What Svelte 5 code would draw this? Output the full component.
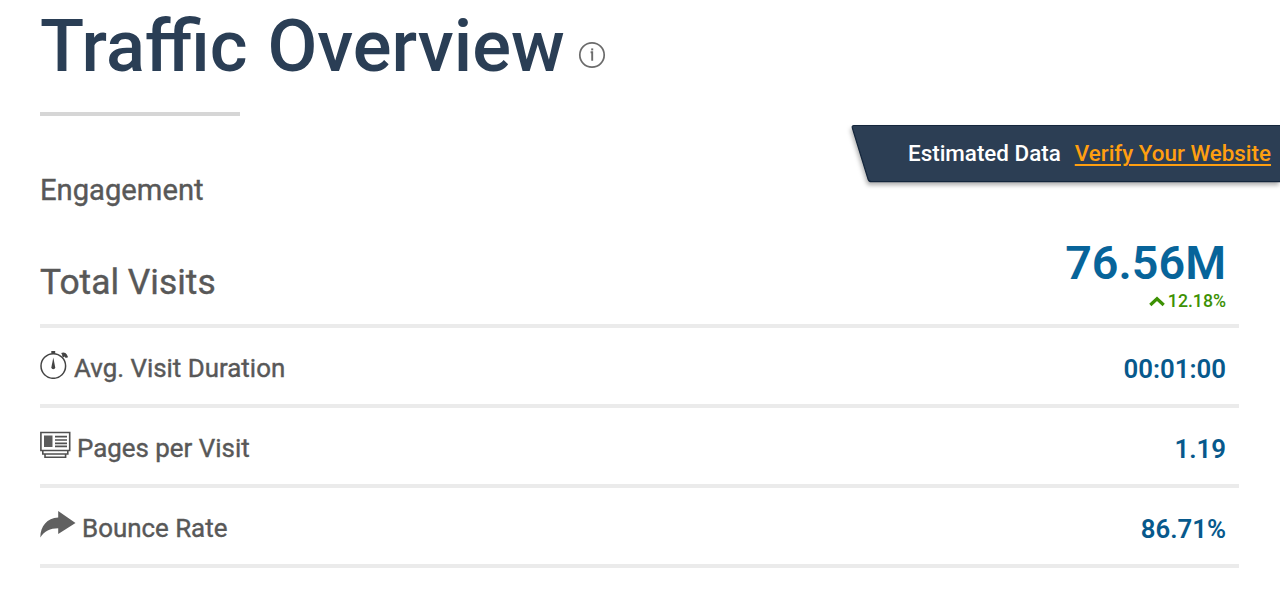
<script>
  const visits = { label: 'Total Visits', value: '76.56M', change: '12.18%' };

  const metrics = [
    { icon: 'clock', label: 'Avg. Visit Duration', value: '00:01:00' },
    { icon: 'pages', label: 'Pages per Visit', value: '1.19' },
    { icon: 'bounce', label: 'Bounce Rate', value: '86.71%' }
  ];
</script>

<section class="overview">
  <header>
    <h1>Traffic Overview</h1>
    <svg class="info" width="28" height="28" viewBox="0 0 28 28" fill="none" stroke="#6b6b6b">
      <circle cx="14" cy="14" r="12.2" stroke-width="1.7" />
      <path d="M12.600 11.300H14.200V19.800" stroke-width="1.900" />
      <path d="M14.200 7.400V9.400" stroke-width="2" />
    </svg>
  </header>
  <div class="rule"></div>

  <div class="subhead">
    <h2>Engagement</h2>
    <aside class="ribbon">
      <svg width="449" height="77" viewBox="0 0 449 77" aria-hidden="true">
        <path d="M23 11.500H451V67.700H40.500Q37.900 67.700 37.100 65.200L21.500 14.500Q20.500 11.500 23 11.500Z" fill="#2c3e54" stroke="#14263c" stroke-width="1.200" />
      </svg>
      <div class="ribbon-text">
        <span>Estimated Data</span>
        <a href="#verify">Verify Your Website</a>
      </div>
    </aside>
  </div>

  <div class="total">
    <span class="total-label">{visits.label}</span>
    <div class="total-figures">
      <strong>{visits.value}</strong>
      <span class="change">
        <svg width="16" height="11" viewBox="0 0 16 11" fill="none" stroke="#3d9104" stroke-width="3.2">
          <path d="M1.300 9L8 2.800L14.700 9" />
        </svg>
        {visits.change}
      </span>
    </div>
  </div>

  <ul>
    {#each metrics as metric}
      <li>
        <span class="label">
          {#if metric.icon === 'clock'}
            <svg width="28" height="28" viewBox="0 0 28 28" fill="none" stroke="#444">
              <circle cx="13.300" cy="15" r="12.300" stroke-width="1.500" />
              <path d="M11.300 1.300H15.200M13.300 1V3" stroke-width="2.600" />
              <path d="M21.800 3.200Q25 1.500 26.800 6.600M22.800 5.800L24.600 3.600" stroke-width="2.600" />
              <path d="M13.300 6.500L15.200 16.300A1.900 1.900 0 1 1 11.400 16.300Z" fill="#444" stroke="none" />
            </svg>
          {:else if metric.icon === 'pages'}
            <svg width="31" height="28" viewBox="0 0 31 28" fill="none" stroke="#505050" stroke-width="1.600">
              <path d="M0.900 1.500H29.700V19.500H0.900Z" />
              <path d="M2.800 20V23H27.800V20M5 23V26.300H25.600V23" />
              <path d="M4 4.500H12.500V16H4Z" fill="#5c5c5c" stroke="none" />
              <path d="M15 5.600H27M15 9H27M15 12.300H27M15 15.300H27" stroke-width="1.700" />
            </svg>
          {:else}
            <svg width="36" height="28" viewBox="0 0 36 28">
              <path d="M18.200 0L35.500 12L18.200 23V17.200C10 17.200 4.500 20 0.300 26.500C0.500 15 7 7 18.200 6.500Z" fill="#606060" />
            </svg>
          {/if}
          <span>{metric.label}</span>
        </span>
        <span class="value">{metric.value}</span>
      </li>
    {/each}
  </ul>
</section>

<style>
  :global(body) {
    background: #fff;
    overflow: hidden;
  }

  .overview {
    box-sizing: border-box;
    width: 1280px;
    height: 590px;
    padding-left: 40px;
    overflow: hidden;
    color: #585858;
    font-family: Roboto, sans-serif;
    font-weight: 400;
  }

  header {
    display: flex;
    height: 112px;
    gap: 13px;
  }

  h1 {
    margin: 5px 0 0;
    color: #2a3e55;
    font-size: 72.4px;
    font-weight: 500;
    line-height: 84px;
    white-space: nowrap;
    word-spacing: 2px;
  }

  .info {
    margin-top: 41px;
  }

  .rule {
    width: 200px;
    height: 4px;
    background: #d6d6d6;
  }

  .subhead {
    display: flex;
    justify-content: space-between;
    height: 120px;
  }

  h2 {
    margin: 57px 0 0;
    font-size: 29.2px;
    font-weight: 400;
    line-height: 34px;
  }

  /* a little heavier than regular, without the wider medium letterforms */
  h2,
  .total-label,
  .label {
    -webkit-text-stroke: 0.4px currentColor;
  }

  .ribbon {
    display: grid;
    width: 449px;
    height: 77px;
    margin-top: -2px;
  }

  .ribbon > * {
    grid-area: 1 / 1;
  }

  .ribbon svg {
    filter: drop-shadow(-1px 3px 2px rgba(0, 0, 0, 0.3));
  }

  .ribbon-text {
    z-index: 1;
    display: flex;
    gap: 14px;
    padding: 26px 0 0 77px;
    color: #fff;
    font-size: 22.4px;
    font-weight: 500;
    line-height: 27px;
    white-space: nowrap;
  }

  a {
    color: #ff9f10;
    text-decoration-thickness: 2px;
    text-underline-offset: 3px;
  }

  .total,
  li {
    display: flex;
    box-sizing: border-box;
    justify-content: space-between;
    width: 1199px;
    padding-right: 13px;
    border-bottom: 4px solid #ebebeb;
  }

  .total {
    height: 92px;
  }

  .total-label {
    margin-top: 25px;
    font-size: 35.4px;
    line-height: 42px;
  }

  .total-figures {
    display: flex;
    flex-direction: column;
    align-items: flex-end;
  }

  strong {
    color: #07649a;
    font-size: 46.700px;
    font-weight: 600;
    line-height: 55px;
  }

  .change {
    display: flex;
    align-items: center;
    gap: 3px;
    color: #3d9104;
    font-size: 17.7px;
    font-weight: 500;
    line-height: 20px;
  }

  ul {
    margin: 0;
    padding: 0;
    list-style: none;
  }

  li {
    align-items: center;
    height: 80px;
  }

  .label {
    display: flex;
    align-items: center;
    gap: 6px;
    font-size: 25.9px;
    line-height: 30px;
  }

  .label svg {
    margin-top: -2px;
  }

  .label span {
    padding-top: 4px;
  }

  .value {
    padding-top: 5px;
    color: #07598c;
    font-size: 25.8px;
    font-weight: 600;
    line-height: 30px;
  }
</style>
